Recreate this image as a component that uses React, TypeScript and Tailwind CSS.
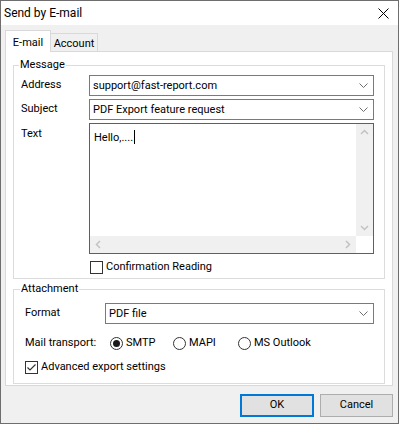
import React from "react";

const FONT = { fontFamily: 'Roboto, "Noto Sans", sans-serif' };

function Chevron() {
  return (
    <svg width="9" height="6" viewBox="0 0 9 6" className="shrink-0">
      <path d="M0.5 0.5 L4.5 4.5 L8.5 0.5" fill="none" stroke="#6d6d6d" strokeWidth="1" />
    </svg>
  );
}

function Combo({ value, className }: { value: string; className?: string }) {
  return (
    <div
      className={
        "flex h-[21px] items-center justify-between border border-[#7a7a7a] bg-white pl-[3px] pr-[5px] text-[11px] leading-none text-black " +
        (className ?? "")
      }
    >
      <span>{value}</span>
      <Chevron />
    </div>
  );
}

function CheckBox({ checked, label }: { checked?: boolean; label: string }) {
  return (
    <div className="flex h-[13px] items-center gap-[3px] text-[11px] text-black">
      <div className="flex h-[13px] w-[13px] items-center justify-center border border-[#333333] bg-white">
        {checked && (
          <svg width="11" height="11" viewBox="0 0 11 11">
            <path d="M1.5 5.5 L4 8 L9.5 2.5" fill="none" stroke="#333333" strokeWidth="1.2" />
          </svg>
        )}
      </div>
      <span>{label}</span>
    </div>
  );
}

function Radio({ checked, label }: { checked?: boolean; label: string }) {
  return (
    <div className="flex items-center gap-[3px] text-[11px] text-black">
      <div className="flex h-[13px] w-[13px] items-center justify-center rounded-full border border-[#333333] bg-white">
        {checked && <div className="h-[7px] w-[7px] rounded-full bg-[#1a1a1a]" />}
      </div>
      <span>{label}</span>
    </div>
  );
}

function ScrollArrow({ d }: { d: string }) {
  return (
    <svg width="9" height="9" viewBox="0 0 9 9">
      <path d={d} fill="none" stroke="#c2c2c2" strokeWidth="1.5" />
    </svg>
  );
}

export default function App() {
  return (
    <div
      style={FONT}
      className="flex h-[424px] w-[399px] flex-col border border-[#6e6e6e] bg-[#f0f0f0] text-[11px] text-black"
    >
      {/* title bar */}
      <div className="flex h-[24px] shrink-0 items-center justify-between bg-white pl-[3px] pr-[9px]">
        <span className="text-[12px]">Send by E-mail</span>
        <svg width="11" height="11" viewBox="0 0 11 11">
          <path d="M0.5 0.5 L10.5 10.5 M10.5 0.5 L0.5 10.5" stroke="#000" strokeWidth="1" />
        </svg>
      </div>

      <div className="flex flex-1 flex-col pl-[4px] pt-[5px]">
        {/* tabs */}
        <div className="flex h-[21px] items-end">
          <div className="relative z-10 -mb-px flex h-[22px] w-[46px] items-start justify-center border border-b-0 border-[#d9d9d9] bg-white pt-[4px]">
            E-mail
          </div>
          <div className="flex h-[18px] w-[47px] items-start justify-center border border-b-0 border-l-0 border-[#d9d9d9] bg-[#f0f0f0] pt-[2px]">
            Account
          </div>
        </div>

        {/* tab panel */}
        <div className="flex h-[335px] w-[388px] flex-col gap-[3px] border border-[#d9d9d9] bg-white px-[7px] pt-[6px]">
          <fieldset className="h-[221px] shrink-0 border border-[#dcdcdc] pl-[7px] pr-[10px]">
            <legend className="-ml-[2px] px-[1px] leading-[14px]">Message</legend>
            <div className="mt-[3px] flex h-[21px] items-center">
              <span className="w-[68px]">Address</span>
              <Combo value="support@fast-report.com" className="flex-1" />
            </div>
            <div className="mt-[3px] flex h-[21px] items-center">
              <span className="w-[68px]">Subject</span>
              <Combo value="PDF Export feature request" className="flex-1" />
            </div>
            <div className="mt-[3px] flex">
              <span className="w-[68px] pt-[3px]">Text</span>
              <div className="flex h-[131px] flex-1 flex-col border border-[#0078d7] bg-white">
                <div className="flex flex-1">
                  <div className="flex-1 pl-[4px] pt-[3px]">
                    Hello,....<span className="ml-[1px] inline-block h-[14px] w-px translate-y-[3px] bg-black" />
                  </div>
                  <div className="flex w-[17px] flex-col items-center justify-between bg-[#f0f0f0] py-[4px]">
                    <ScrollArrow d="M1 6 L4.5 2.5 L8 6" />
                    <ScrollArrow d="M1 3 L4.5 6.5 L8 3" />
                  </div>
                </div>
                <div className="flex h-[17px]">
                  <div className="flex flex-1 items-center justify-between bg-[#f0f0f0] px-[4px]">
                    <ScrollArrow d="M6 1 L2.5 4.5 L6 8" />
                    <ScrollArrow d="M3 1 L6.5 4.5 L3 8" />
                  </div>
                  <div className="w-[17px] bg-white" />
                </div>
              </div>
            </div>
            <div className="ml-[69px] mt-[7px]">
              <CheckBox label="Confirmation Reading" />
            </div>
          </fieldset>

          <fieldset className="h-[102px] shrink-0 border border-[#dcdcdc] pl-[11px] pr-[10px]">
            <legend className="-ml-[5px] px-[1px] leading-[14px]">Attachment</legend>
            <div className="mt-[7px] flex h-[21px] items-center">
              <span className="w-[80px]">Format</span>
              <Combo value="PDF file" className="flex-1" />
            </div>
            <div className="mt-[13px] flex h-[13px] items-center">
              <span className="w-[85px]">Mail transport:</span>
              <div className="w-[63px]">
                <Radio checked label="SMTP" />
              </div>
              <div className="w-[65px]">
                <Radio label="MAPI" />
              </div>
              <Radio label="MS Outlook" />
            </div>
            <div className="mt-[11px]">
              <CheckBox checked label="Advanced export settings" />
            </div>
          </fieldset>
        </div>

        {/* buttons */}
        <div className="mt-[8px] flex w-[388px] justify-end gap-[6px]">
          <button className="flex h-[23px] w-[74px] items-center justify-center border-2 border-[#0078d7] bg-[#e1e1e1] text-[11px]">
            OK
          </button>
          <button className="flex h-[23px] w-[73px] items-center justify-center border border-[#adadad] bg-[#e1e1e1] text-[11px]">
            Cancel
          </button>
        </div>
      </div>
    </div>
  );
}
